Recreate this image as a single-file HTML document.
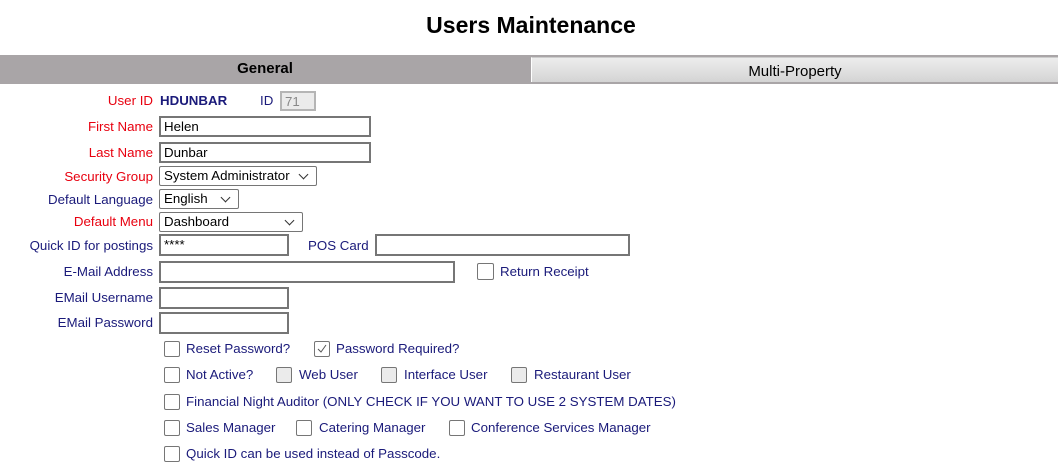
<!DOCTYPE html><html><head><style>
body{margin:0;width:1058px;height:465px;background:#fff;font-family:"Liberation Sans",Arial,sans-serif;position:relative;overflow:hidden;font-size:13.3px}
.a{position:absolute;white-space:nowrap}
h1{position:absolute;top:12px;left:0;width:1062px;text-align:center;margin:0;font-size:23px;font-weight:bold;color:#000}
.band{position:absolute;top:55px;left:0;width:1058px;height:29px;background:#a9a5a7}
.gen{position:absolute;top:55px;left:0;width:530px;height:29px;text-align:center;line-height:27px;font-weight:bold;font-size:15px}
.mp{position:absolute;top:57px;left:531px;width:527px;height:25px;background:linear-gradient(#ededed,#d4d4d4);border-left:1px solid #fff;border-top:1px solid #ccc;text-align:center;line-height:27px;font-size:15px;box-sizing:border-box}
.l{position:absolute;right:905px;white-space:nowrap}
.r{color:#e8000f}.b{color:#1a1a7a}
.in{position:absolute;border:2px solid #767676;box-sizing:border-box;background:#fff;padding-left:3px;color:#000;line-height:17px}
.sel{position:absolute;border:1px solid #767676;border-radius:2px;box-sizing:border-box;padding-left:4px;color:#000;line-height:17px}
.sel:after{content:"";position:absolute;right:9px;top:4px;width:6px;height:6px;border-right:1px solid #333;border-bottom:1px solid #333;transform:rotate(45deg)}
.cb{position:absolute;width:16px;height:16px;border:1px solid #767676;border-radius:2px;box-sizing:border-box;background:#fff}
.cb.g{background:#ebebeb}
.t{position:absolute;color:#1a1a7a;white-space:nowrap}
</style></head><body>
<h1>Users Maintenance</h1>
<div class="band"></div>
<div class="gen">General</div>
<div class="mp">Multi-Property</div>

<div class="l r" style="top:93px">User ID</div>
<div class="a b" style="left:160px;top:93px;font-weight:bold">HDUNBAR</div>
<div class="a b" style="left:260px;top:93px">ID</div>
<div class="in" style="left:280px;top:91px;width:36px;height:20px;background:#ebebeb;border-color:#b5b5b5;color:#888">71</div>

<div class="l r" style="top:119px">First Name</div>
<div class="in" style="left:159px;top:116px;width:212px;height:21px">Helen</div>
<div class="l r" style="top:145px">Last Name</div>
<div class="in" style="left:159px;top:142px;width:212px;height:21px">Dunbar</div>
<div class="l r" style="top:169px">Security Group</div>
<div class="sel" style="left:159px;top:166px;width:158px;height:20px">System Administrator</div>
<div class="l b" style="top:192px">Default Language</div>
<div class="sel" style="left:159px;top:189px;width:80px;height:20px">English</div>
<div class="l r" style="top:214px">Default Menu</div>
<div class="sel" style="left:159px;top:212px;width:144px;height:20px">Dashboard</div>
<div class="l b" style="top:238px">Quick ID for postings</div>
<div class="in" style="left:159px;top:234px;width:130px;height:22px">****</div>
<div class="t" style="left:308px;top:238px">POS Card</div>
<div class="in" style="left:375px;top:234px;width:255px;height:22px"></div>
<div class="l b" style="top:264px">E-Mail Address</div>
<div class="in" style="left:159px;top:261px;width:296px;height:22px"></div>
<div class="cb" style="left:477px;top:263px;width:17px;height:17px"></div>
<div class="t" style="left:500px;top:264px">Return Receipt</div>
<div class="l b" style="top:290px">EMail Username</div>
<div class="in" style="left:159px;top:287px;width:130px;height:22px"></div>
<div class="l b" style="top:315px">EMail Password</div>
<div class="in" style="left:159px;top:312px;width:130px;height:22px"></div>

<div class="cb" style="left:164px;top:341px"></div><div class="t" style="left:186px;top:341px">Reset Password?</div>
<div class="cb" style="left:314px;top:341px"><svg width="14" height="14" style="position:absolute;left:0;top:0"><path d="M3 7 L6 10 L11 3" fill="none" stroke="#555" stroke-width="1"/></svg></div><div class="t" style="left:336px;top:341px">Password Required?</div>
<div class="cb" style="left:164px;top:367px"></div><div class="t" style="left:186px;top:367px">Not Active?</div>
<div class="cb g" style="left:276px;top:367px"></div><div class="t" style="left:299px;top:367px">Web User</div>
<div class="cb g" style="left:381px;top:367px"></div><div class="t" style="left:404px;top:367px">Interface User</div>
<div class="cb g" style="left:511px;top:367px"></div><div class="t" style="left:534px;top:367px">Restaurant User</div>
<div class="cb" style="left:164px;top:394px"></div><div class="t" style="left:186px;top:394px">Financial Night Auditor (ONLY CHECK IF YOU WANT TO USE 2 SYSTEM DATES)</div>
<div class="cb" style="left:164px;top:420px"></div><div class="t" style="left:186px;top:420px">Sales Manager</div>
<div class="cb" style="left:296px;top:420px"></div><div class="t" style="left:319px;top:420px">Catering Manager</div>
<div class="cb" style="left:449px;top:420px"></div><div class="t" style="left:471px;top:420px">Conference Services Manager</div>
<div class="cb" style="left:164px;top:446px"></div><div class="t" style="left:186px;top:446px">Quick ID can be used instead of Passcode.</div>
</body></html>
